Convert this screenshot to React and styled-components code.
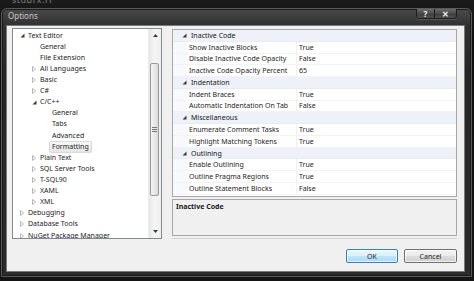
import React from "react";
import styled, { createGlobalStyle } from "styled-components";

const Global = createGlobalStyle`
  html, body { margin: 0; padding: 0; background: #121212; overflow: hidden; }
  * { box-sizing: border-box; }
`;

const FONT = `"Noto Sans", "Open Sans", sans-serif`;

const Screen = styled.div`
  width: 474px;
  height: 281px;
  background: linear-gradient(180deg, #1b1b1b, #0e0e0e 40px, #141414);
  display: flex;
  flex-direction: column;
  font-family: ${FONT};
  font-size: 7px;
  color: #1e1e1e;
`;

const TopStrip = styled.div`
  height: 8px;
  overflow: hidden;
  padding-left: 12px;
  flex: none;
`;

const BackTitle = styled.div`
  margin-top: -5px;
  font-size: 9px;
  line-height: 10px;
  color: #7d7d7d;
  letter-spacing: 0.5px;
`;

const Window = styled.div`
  flex: 1;
  margin: 0 2px 4px 1px;
  border: 1px solid #5a5a5a;
  border-radius: 6px 6px 0 0;
  background: linear-gradient(180deg, #4a4a4a 0px, #313131 16px, #262626 60px, #2b2b2b);
  padding: 0 6px 4px 4px;
  display: flex;
  flex-direction: column;
  box-shadow: inset 0 0 0 1px #1a1a1a;
`;

const TitleBar = styled.div`
  height: 16px;
  flex: none;
  display: flex;
  align-items: flex-start;
`;

const Title = styled.div`
  padding-left: 2px;
  line-height: 13px;
  font-size: 8px;
  color: #c9c9c9;
`;

const CaptionButtons = styled.div`
  margin-left: auto;
  margin-right: 8px;
  display: flex;
  height: 10px;
  border: 1px solid #1c1c1c;
  border-top: none;
  border-radius: 0 0 4px 4px;
  overflow: hidden;
  box-shadow: 0 1px 0 rgba(255,255,255,0.15);
`;

const CaptionButton = styled.div`
  width: ${(p) => p.$w}px;
  display: flex;
  align-items: center;
  justify-content: center;
  background: linear-gradient(180deg, #6a6a6a, #4a4a4a 50%, #3c3c3c 51%, #505050);
  color: #f2f2f2;
  font-size: 8px;
  font-weight: bold;
  line-height: 1;
  & + & { border-left: 1px solid #1c1c1c; }
`;

const Client = styled.div`
  flex: 1;
  background: #f0f0f0;
  border: 1px solid #7a7a7a;
  padding: 2px 7px 0 5px;
  display: flex;
  flex-direction: column;
`;

const Content = styled.div`
  height: 211px;
  display: flex;
  gap: 10px;
`;

const TreeBox = styled.div`
  width: 150px;
  border: 1px solid #828790;
  background: #fff;
  display: flex;
  overflow: hidden;
`;

const TreeList = styled.div`
  flex: 1;
  padding-top: 1px;
  overflow: hidden;
`;

const TreeRow = styled.div`
  height: 11.12px;
  display: flex;
  align-items: center;
  padding-left: ${(p) => 4 + p.$level * 12}px;
  white-space: nowrap;
`;

const Toggle = styled.span`
  width: 10px;
  height: 8px;
  flex: none;
  display: flex;
  align-items: center;
  justify-content: center;
`;

const TreeLabel = styled.span`
  line-height: 10px;
  padding: 0 2px;
  margin-left: -2px;
  border: 1px solid ${(p) => (p.$selected ? "#d9d9d9" : "transparent")};
  background: ${(p) => (p.$selected ? "linear-gradient(180deg, #f8f8f8, #e5e5e5)" : "transparent")};
  border-radius: 2px;
`;

const ScrollBar = styled.div`
  width: 13px;
  flex: none;
  background: linear-gradient(90deg, #e6e6e6, #f4f4f4 40%, #f0f0f0);
  border-left: 1px solid #ececec;
  display: flex;
  flex-direction: column;
  align-items: center;
`;

const ArrowBox = styled.div`
  height: 13px;
  width: 100%;
  display: flex;
  align-items: center;
  justify-content: center;
  flex: none;
`;

const Track = styled.div`
  flex: 1;
  width: 100%;
  padding: 21px 2px 0 1px;
`;

const Thumb = styled.div`
  height: 133px;
  border: 1px solid #9a9a9a;
  border-radius: 2px;
  background: linear-gradient(90deg, #f4f4f4, #e8e8e8 50%, #dadada);
  display: flex;
  align-items: center;
  justify-content: center;
`;

const Grip = styled.div`
  width: 5px;
  height: 5px;
  background: repeating-linear-gradient(180deg, #777 0 1px, transparent 1px 2px);
`;

const RightPanel = styled.div`
  flex: 1;
  padding-top: 1px;
  display: flex;
  flex-direction: column;
  border-bottom: 1px solid #d4d4d4;
`;

const Grid = styled.div`
  height: 168px;
  border: 1px solid #a7a7a7;
  background: #fff;
  overflow: hidden;
`;

const GridRow = styled.div`
  height: 11.77px;
  display: grid;
  grid-template-columns: 15px 108px 1fr;
  align-items: center;
  background: ${(p) => (p.$category ? "#eef2f8" : "#fff")};
  border-bottom: 1px solid ${(p) => (p.$category ? "#e7ecf3" : "#f3f3f3")};
  white-space: nowrap;
`;

const Margin = styled.div`
  height: 100%;
  display: flex;
  align-items: center;
  justify-content: flex-end;
  padding-right: 1px;
  background: ${(p) => (p.$category ? "transparent" : "#f7f9fc")};
`;

const NameCell = styled.div`
  padding-left: ${(p) => (p.$category ? 3 : 1)}px;
  color: ${(p) => (p.$category ? "#151515" : "#1e1e1e")};
  ${(p) => (p.$category ? "grid-column: 2 / 4;" : "")}
`;

const ValueCell = styled.div`
  height: 100%;
  display: flex;
  align-items: center;
  padding-left: 2px;
  border-left: 1px solid #f0f0f0;
`;

const Description = styled.div`
  margin-top: 2px;
  height: 37px;
  border: 1px solid #a7a7a7;
  background: #f0f0f0;
  padding: 2px 3px;
  font-weight: bold;
  color: #1a1a1a;
`;

const ButtonRow = styled.div`
  margin-top: 10px;
  display: flex;
  justify-content: flex-end;
  gap: 6px;
`;

const Button = styled.div`
  width: ${(p) => p.$w}px;
  height: 14px;
  border-radius: 2px;
  display: flex;
  align-items: center;
  justify-content: center;
  border: 1px solid ${(p) => (p.$default ? "#3c7fb1" : "#707070")};
  background: ${(p) =>
    p.$default
      ? "linear-gradient(180deg, #eaf6fd 0%, #d9f0fc 50%, #bee6fd 51%, #a7d9f5 100%)"
      : "linear-gradient(180deg, #f2f2f2 0%, #ebebeb 50%, #dddddd 51%, #cfcfcf 100%)"};
  box-shadow: inset 0 0 0 1px rgba(255,255,255,0.7);
  color: #1a1a1a;
`;

const Expanded = () => (
  <svg width="5" height="5" viewBox="0 0 5 5">
    <path d="M4.5 0.5 L4.5 4.5 L0.5 4.5 Z" fill="#3a3a3a" />
  </svg>
);

const Collapsed = () => (
  <svg width="4" height="6" viewBox="0 0 4 6">
    <path d="M0.5 0.5 L3.5 3 L0.5 5.5 Z" fill="none" stroke="#a6a6a6" strokeWidth="0.8" />
  </svg>
);

const ArrowUp = () => (
  <svg width="5" height="3" viewBox="0 0 5 3">
    <path d="M0 3 L2.5 0 L5 3 Z" fill="#3a3a3a" />
  </svg>
);

const ArrowDown = () => (
  <svg width="5" height="3" viewBox="0 0 5 3">
    <path d="M0 0 L5 0 L2.5 3 Z" fill="#3a3a3a" />
  </svg>
);

const tree = [
  { label: "Text Editor", level: 0, state: "open" },
  { label: "General", level: 1 },
  { label: "File Extension", level: 1 },
  { label: "All Languages", level: 1, state: "closed" },
  { label: "Basic", level: 1, state: "closed" },
  { label: "C#", level: 1, state: "closed" },
  { label: "C/C++", level: 1, state: "open" },
  { label: "General", level: 2 },
  { label: "Tabs", level: 2 },
  { label: "Advanced", level: 2 },
  { label: "Formatting", level: 2, selected: true },
  { label: "Plain Text", level: 1, state: "closed" },
  { label: "SQL Server Tools", level: 1, state: "closed" },
  { label: "T-SQL90", level: 1, state: "closed" },
  { label: "XAML", level: 1, state: "closed" },
  { label: "XML", level: 1, state: "closed" },
  { label: "Debugging", level: 0, state: "closed" },
  { label: "Database Tools", level: 0, state: "closed" },
  { label: "NuGet Package Manager", level: 0, state: "closed" },
];

const props = [
  { cat: "Inactive Code" },
  { name: "Show Inactive Blocks", value: "True" },
  { name: "Disable Inactive Code Opacity", value: "False" },
  { name: "Inactive Code Opacity Percent", value: "65" },
  { cat: "Indentation" },
  { name: "Indent Braces", value: "True" },
  { name: "Automatic Indentation On Tab", value: "False" },
  { cat: "Miscellaneous" },
  { name: "Enumerate Comment Tasks", value: "True" },
  { name: "Highlight Matching Tokens", value: "True" },
  { cat: "Outlining" },
  { name: "Enable Outlining", value: "True" },
  { name: "Outline Pragma Regions", value: "True" },
  { name: "Outline Statement Blocks", value: "False" },
];

export default function App() {
  return (
    <>
      <Global />
      <Screen>
        <TopStrip>
          <BackTitle>studrx.ri</BackTitle>
        </TopStrip>
        <Window>
          <TitleBar>
            <Title>Options</Title>
            <CaptionButtons>
              <CaptionButton $w={17}>?</CaptionButton>
              <CaptionButton $w={22}>✕</CaptionButton>
            </CaptionButtons>
          </TitleBar>
          <Client>
            <Content>
              <TreeBox>
                <TreeList>
                  {tree.map((t, i) => (
                    <TreeRow key={i} $level={t.level}>
                      <Toggle>
                        {t.state === "open" && <Expanded />}
                        {t.state === "closed" && <Collapsed />}
                      </Toggle>
                      <TreeLabel $selected={t.selected}>{t.label}</TreeLabel>
                    </TreeRow>
                  ))}
                </TreeList>
                <ScrollBar>
                  <ArrowBox><ArrowUp /></ArrowBox>
                  <Track>
                    <Thumb><Grip /></Thumb>
                  </Track>
                  <ArrowBox><ArrowDown /></ArrowBox>
                </ScrollBar>
              </TreeBox>
              <RightPanel>
                <Grid>
                  {props.map((p, i) =>
                    p.cat ? (
                      <GridRow key={i} $category>
                        <Margin $category><Expanded /></Margin>
                        <NameCell $category>{p.cat}</NameCell>
                      </GridRow>
                    ) : (
                      <GridRow key={i}>
                        <Margin />
                        <NameCell>{p.name}</NameCell>
                        <ValueCell>{p.value}</ValueCell>
                      </GridRow>
                    )
                  )}
                </Grid>
                <Description>Inactive Code</Description>
              </RightPanel>
            </Content>
            <ButtonRow>
              <Button $w={52} $default>OK</Button>
              <Button $w={53}>Cancel</Button>
            </ButtonRow>
          </Client>
        </Window>
      </Screen>
    </>
  );
}
